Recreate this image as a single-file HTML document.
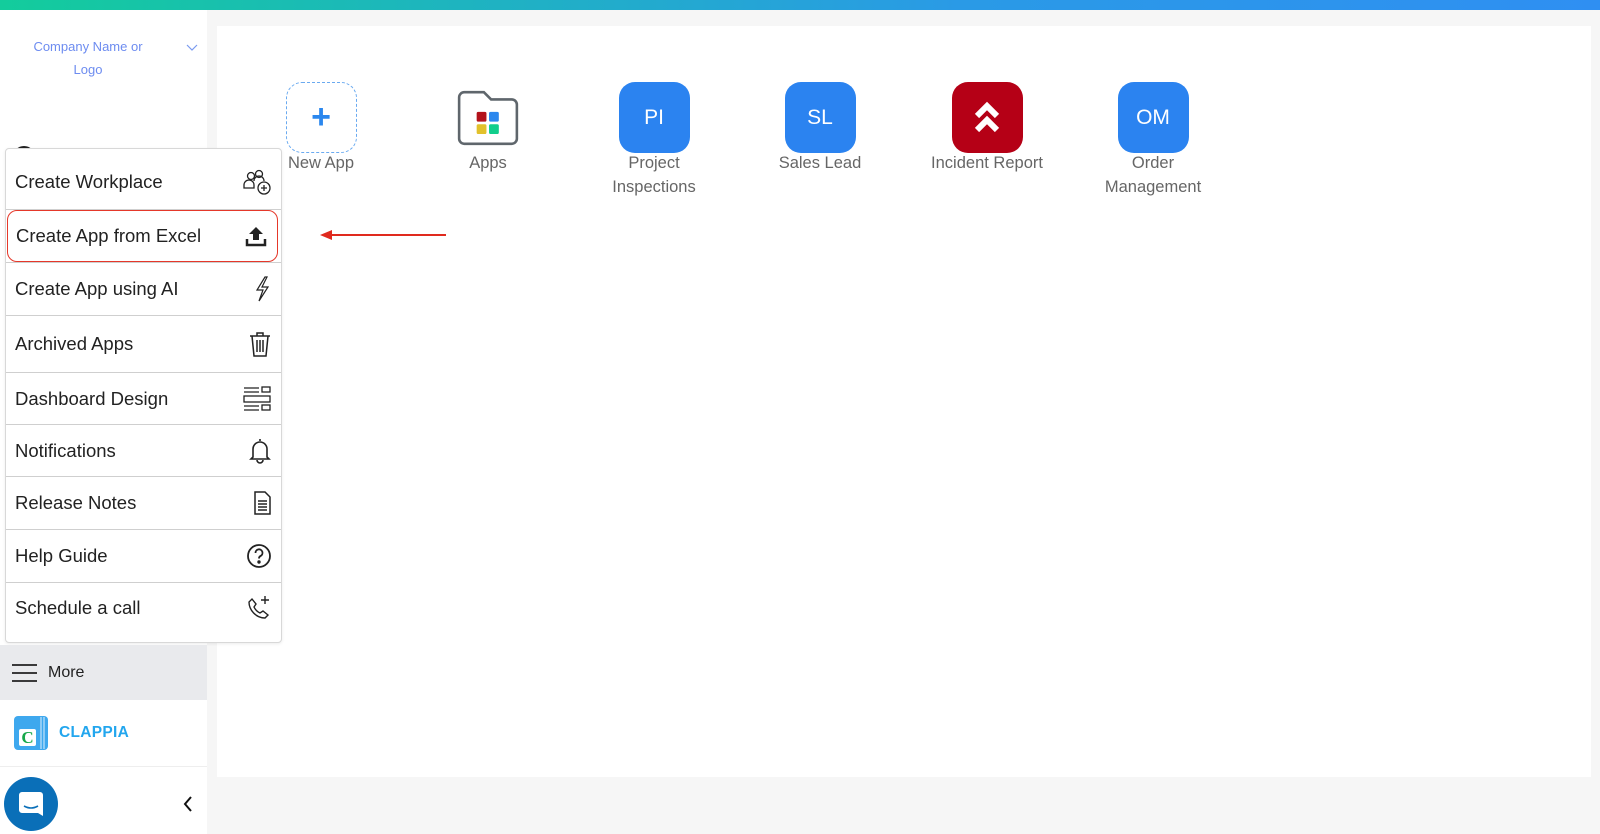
<!DOCTYPE html>
<html><head><meta charset="utf-8"><style>
*{box-sizing:border-box;margin:0;padding:0}
body{width:1600px;height:834px;overflow:hidden;background:#f6f6f6;font-family:"Liberation Sans",sans-serif;position:relative}
.top{position:absolute;left:0;top:0;width:1600px;height:10px;background:linear-gradient(90deg,#13cc9c,#2a9ae6 60%,#2f8ff2)}
.side{position:absolute;left:0;top:10px;width:207px;height:824px;background:#fff}
.panel{position:absolute;left:217px;top:26px;width:1374px;height:751px;background:#fff}
.co{position:absolute;left:18px;top:25px;width:140px;text-align:center;color:#6d8cf0;font-size:13px;line-height:23px}
.menu{position:absolute;left:5px;top:148px;width:277px;height:495px;background:#fff;border:1px solid #d8d8d8;border-radius:4px;box-shadow:0 1px 3px rgba(0,0,0,.08)}
.row{position:absolute;left:0;width:275px;border-bottom:1.5px solid #cfcfcf;font-size:18.5px;color:#222;padding-left:9px;display:flex;align-items:center}
.row svg{position:absolute;right:9px}
.more{position:absolute;left:0;top:645px;width:207px;height:55px;background:#e9eaed;display:flex;align-items:center;font-size:16px;color:#222}
.clap{position:absolute;left:0;top:700px;width:207px;height:67px;border-bottom:1px solid #eee;display:flex;align-items:center}
.app{position:absolute;top:82px;width:160px;text-align:center;color:#666;font-size:16.5px;line-height:23.5px}
.ic{width:71px;height:71px;border-radius:16px;margin:0 auto 0;display:flex;align-items:center;justify-content:center;color:#fff;font-size:21px}
</style></head><body>
<div class="top"></div>
<div class="side">
<div class="co">Company Name or<br>Logo</div>
<svg style="position:absolute;left:186px;top:34px" width="12" height="8"><path d="M1 1l5 5 5-5" fill="none" stroke="#7a9af0" stroke-width="1.2"/></svg>
<div style="position:absolute;left:13px;top:136px;width:22px;height:22px;border:2px solid #222;border-radius:50%"></div>
</div>
<div class="panel"></div>

<div class="app" style="left:241px"><div class="ic" style="border:1.5px dashed #6aaaf0;color:#2b87ee;font-size:34px;font-weight:bold">+</div><div style="margin-top:-1px">New App</div></div>
<div class="app" style="left:408px"><div class="ic"><svg width="66" height="62" viewBox="0 0 64 60"><path d="M4 10a5 5 0 0 1 5-5h19l7 7h20a5 5 0 0 1 5 5v33a5 5 0 0 1-5 5H9a5 5 0 0 1-5-5z" fill="none" stroke="#5f666c" stroke-width="2.5"/><rect x="21" y="24" width="9.5" height="9.5" rx="1.5" fill="#b3121b"/><rect x="33" y="24" width="9.5" height="9.5" rx="1.5" fill="#2b87ee"/><rect x="21" y="36" width="9.5" height="9.5" rx="1.5" fill="#e2c12b"/><rect x="33" y="36" width="9.5" height="9.5" rx="1.5" fill="#11ce8c"/></svg></div><div style="margin-top:-1px">Apps</div></div>
<div class="app" style="left:574px"><div class="ic" style="background:#2b83f0">PI</div><div style="margin-top:-1px">Project<br>Inspections</div></div>
<div class="app" style="left:740px"><div class="ic" style="background:#2b83f0">SL</div><div style="margin-top:-1px">Sales Lead</div></div>
<div class="app" style="left:907px"><div class="ic" style="background:#b50016"><svg width="30" height="36" viewBox="0 0 30 36"><path d="M5 16l10-10 10 10M5 30l10-10 10 10" fill="none" stroke="#fff" stroke-width="6" stroke-linejoin="miter"/></svg></div><div style="margin-top:-1px">Incident Report</div></div>
<div class="app" style="left:1073px"><div class="ic" style="background:#2b83f0">OM</div><div style="margin-top:-1px">Order<br>Management</div></div>

<svg style="position:absolute;left:318px;top:228px" width="130" height="14"><path d="M128 7H12" stroke="#e02a1e" stroke-width="2"/><path d="M2 7l12-5v10z" fill="#e02a1e"/></svg>

<div class="menu">
<div class="row" style="top:0;height:61px;padding-top:6px">Create Workplace<svg width="30" height="28" viewBox="0 0 30 28" fill="none" stroke="#222" stroke-width="1.3"><circle cx="9" cy="8" r="3.5"/><path d="M2 20v-3a5 5 0 0 1 10 0v3z"/><circle cx="17" cy="6" r="3.5"/><path d="M12 13a5 5 0 0 1 10 0"/><circle cx="22" cy="20" r="6" fill="#fff"/><path d="M22 17v6M19 20h6"/></svg></div>
<div class="row" style="top:61px;height:52px;border:1.5px solid #e5382a;border-radius:10px;margin-left:1px;width:271px;padding-left:8px">Create App from Excel<svg width="24" height="24" viewBox="0 0 24 24"><path d="M12 3l-7 7h4v6h6v-6h4z" fill="#222"/><path d="M3 15v6h18v-6" fill="none" stroke="#222" stroke-width="2.5"/></svg></div>
<div style="position:absolute;left:0;top:113px;width:275px;border-top:1.5px solid #cfcfcf"></div>
<div class="row" style="top:114px;height:53px">Create App using AI<svg width="20" height="28" viewBox="0 0 20 28" fill="none" stroke="#222" stroke-width="1.2"><path d="M13 2L5 15h6l-4 11 9-14h-6l5-10z"/></svg></div>
<div class="row" style="top:167px;height:57px">Archived Apps<svg width="24" height="28" viewBox="0 0 24 28" fill="none" stroke="#222" stroke-width="1.5"><path d="M2 6h20M9 6V3h6v3M4 6l2 20h12l2-20M9 10v12M12 10v12M15 10v12"/></svg></div>
<div class="row" style="top:224px;height:52px">Dashboard Design<svg width="30" height="30" viewBox="0 0 30 30" fill="none" stroke="#222" stroke-width="1.3"><path d="M2 4h15M2 8h15"/><rect x="20" y="3" width="8" height="5"/><rect x="2" y="12" width="26" height="6"/><path d="M2 22h15M2 26h15"/><rect x="20" y="21" width="8" height="5"/></svg></div>
<div class="row" style="top:276px;height:52px">Notifications<svg width="24" height="28" viewBox="0 0 24 28" fill="none" stroke="#222" stroke-width="1.6"><path d="M12 2v2M5 20V12a7 7 0 0 1 14 0v8l2 2H3z"/><path d="M9 23a3 3 0 0 0 6 0"/></svg></div>
<div class="row" style="top:328px;height:53px">Release Notes<svg width="20" height="26" viewBox="0 0 20 26" fill="none" stroke="#222" stroke-width="1.5"><path d="M3 2h10l5 5v17H3z"/><path d="M6 11h9M6 14h9M6 17h9M6 20h9"/></svg></div>
<div class="row" style="top:381px;height:53px">Help Guide<svg width="26" height="26" viewBox="0 0 26 26" fill="none" stroke="#222" stroke-width="1.8"><circle cx="13" cy="13" r="11"/><path d="M9.5 10a3.5 3.5 0 1 1 5 3c-1.2.6-1.5 1.3-1.5 2.5"/><circle cx="13" cy="19" r=".8" fill="#222"/></svg></div>
<div class="row" style="top:434px;height:50px;border-bottom:none">Schedule a call<svg width="26" height="28" viewBox="0 0 26 28" fill="none" stroke="#222" stroke-width="1.4"><path d="M6 5l4 5-2 3a13 13 0 0 0 6 6l3-2 5 4-3 3C10 24 3 16 3 8z"/><path d="M19 2v8M15 6h8"/></svg></div>
</div>

<div class="more"><svg style="margin:0 11px 0 12px" width="25" height="20"><path d="M0 2h25M0 10h25M0 18h25" stroke="#222" stroke-width="1.8"/></svg>More</div>
<div class="clap"><svg style="margin-left:14px" width="35" height="34" viewBox="0 0 35 34"><rect x="0" y="0" width="34" height="34" rx="4" fill="#3ea8ee"/><path d="M27 1v32M30 1v32" stroke="#a9d8f8" stroke-width="1.5"/><rect x="5" y="13" width="17" height="17" rx="2" fill="#fff"/><text x="13.5" y="27" text-anchor="middle" font-family="Liberation Serif" font-weight="bold" font-size="17" fill="#17a84a">C</text></svg><span style="margin-left:10px;color:#22a6ee;font-weight:bold;font-size:15.5px;letter-spacing:.3px">CLAPPIA</span></div>
<div style="position:absolute;left:4px;top:777px;width:54px;height:54px;border-radius:50%;background:#0a6fb8"></div>
<svg style="position:absolute;left:18px;top:791px" width="26" height="26" viewBox="0 0 26 26"><path d="M4 1h18a3 3 0 0 1 3 3v21l-5-3H4a3 3 0 0 1-3-3V4a3 3 0 0 1 3-3z" fill="#fff"/><path d="M6 15q7 4 14 0" fill="none" stroke="#0a6fb8" stroke-width="1.6"/></svg>
<svg style="position:absolute;left:182px;top:795px" width="12" height="18"><path d="M9 2L3 9l6 7" fill="none" stroke="#111" stroke-width="2"/></svg>
</body></html>
